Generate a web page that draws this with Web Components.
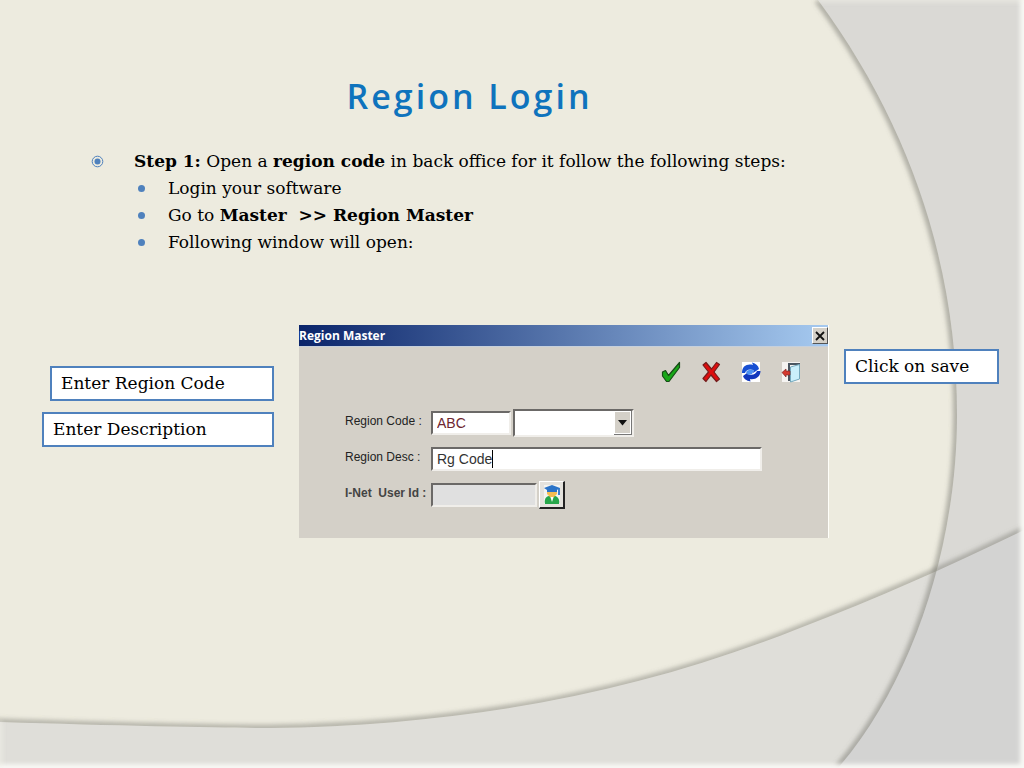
<!DOCTYPE html>
<html lang="en">
<head>
<meta charset="utf-8">
<meta name="viewport" content="width=device-width, initial-scale=1">
<title>Region Login</title>
<style>
html, body { margin: 0; min-height: 100%; background: #edebdf; }
body { font-family: "DejaVu Serif", serif; color: #000; }
</style>
</head>
<body>
<slide-page>
  <slide-title slot="title">Region Login</slide-title>
  <step-list slot="steps">
    <span><b>Step 1:</b> Open a <b>region code</b> in back office for it follow the following steps:</span>
    <step-item slot="items">Login your software</step-item>
    <step-item slot="items">Go to <b>Master&nbsp; &gt;&gt; Region Master</b></step-item>
    <step-item slot="items">Following window will open:</step-item>
  </step-list>
  <call-out slot="left" class="code">Enter Region Code</call-out>
  <call-out slot="left">Enter Description</call-out>
  <region-window slot="window"></region-window>
  <call-out slot="right">Click on save</call-out>
</slide-page>

<script>
function define(name, html) {
  const template = document.createElement('template');
  template.innerHTML = html;
  customElements.define(name, class extends HTMLElement {
    constructor() {
      super();
      this.attachShadow({ mode: 'open' }).append(template.content.cloneNode(true));
    }
  });
}

define('slide-backdrop', `
<style>
:host { display: block; }
svg { display: block; width: 100%; height: 100%; }
</style>
<svg viewBox="0 0 1024 768" preserveAspectRatio="none" aria-hidden="true">
  <defs>
    <filter id="soft" x="-10%" y="-10%" width="120%" height="120%"><feGaussianBlur stdDeviation="2"/></filter>
    <clipPath id="inside"><path d="M0 0H818C908 122 957 262 957 415C957 550 910 685 838 768H0Z"/></clipPath>
    <clipPath id="above"><path d="M0 0H1024V530C950 566 880 597 800 628C640 692 470 725 270 728C230 728 130 726 0 722Z"/></clipPath>
  </defs>
  <rect width="1024" height="768" fill="#edebdf"/>
  <path d="M0 722C130 726 230 728 270 728C470 725 640 692 800 628C880 597 950 566 1024 530V768H0Z" fill="#d2d1d4" fill-opacity=".5"/>
  <path d="M818 0C908 122 957 262 957 415C957 550 910 685 838 768H1024V0Z" fill="#c8c7cb" fill-opacity=".5"/>
  <g clip-path="url(#inside)"><path d="M818 0C908 122 957 262 957 415C957 550 910 685 838 768" fill="none" stroke="#77776f" stroke-opacity=".5" stroke-width="8" filter="url(#soft)"/></g>
  <g clip-path="url(#above)"><path d="M-20 721L0 722C130 726 230 728 270 728C470 725 640 692 800 628C880 597 950 566 1024 530" fill="none" stroke="#77776f" stroke-opacity=".46" stroke-width="7" filter="url(#soft)"/></g>
  <path d="M1024 -10V768H-10" fill="none" stroke="#f8f8f4" stroke-width="8" filter="url(#soft)"/>
  <path d="M0 721V768M818 0H1024" fill="none" stroke="#f3f2ea" stroke-width="3" filter="url(#soft)" opacity=".8"/>
</svg>`);

define('slide-page', `
<style>
:host { display: block; position: relative; box-sizing: border-box; min-height: 100vh; padding: 69px 25px 40px 42px; }
slide-backdrop { position: absolute; inset: 0; }
main { position: relative; }
.steps { padding: 25px 0 0 49px; }
.row { display: grid; grid-template-columns: 242fr 530fr 155fr; column-gap: 15px; padding-top: 69px; align-items: start; }
.left { display: flex; flex-direction: column; gap: 11px; padding: 41px 10px 0 0; }
.right { padding-top: 24px; }
::slotted(.code) { margin-left: 8px; }
</style>
<slide-backdrop></slide-backdrop>
<main>
  <slot name="title"></slot>
  <div class="steps"><slot name="steps"></slot></div>
  <div class="row">
    <div class="left"><slot name="left"></slot></div>
    <slot name="window"></slot>
    <div class="right"><slot name="right"></slot></div>
  </div>
</main>`);

define('slide-title', `
<style>
:host { display: block; padding-right: 102px; }
h1 { margin: 0; font: 600 34px/54px "Open Sans", sans-serif; letter-spacing: 3px; text-align: center; color: #0f73bd; }
</style>
<h1><slot></slot></h1>`);

define('step-list', `
<style>
:host { display: block; font-size: 17px; line-height: 27px; }
ul { list-style: none; margin: 0; padding: 0; }
.head { display: grid; grid-template-columns: 43px 1fr; align-items: center; }
svg { display: block; width: 13px; height: 13px; }
ul ul { padding-left: 47px; }
</style>
<ul><li>
  <div class="head">
    <svg viewBox="0 0 13 13" aria-hidden="true"><circle cx="6.500" cy="6.500" r="5.300" fill="none" stroke="#4f81bd" stroke-width="1"/><circle cx="6.500" cy="6.500" r="3" fill="#4f81bd"/></svg>
    <slot></slot>
  </div>
  <ul><slot name="items"></slot></ul>
</li></ul>`);

define('step-item', `
<style>
:host { display: block; }
li { list-style: none; display: grid; grid-template-columns: 30px 1fr; align-items: center; }
i { width: 7px; height: 7px; border-radius: 50%; background: #4f81bd; }
</style>
<li><i></i><span><slot></slot></span></li>`);

define('call-out', `
<style>
:host { display: block; box-sizing: border-box; padding: 4px 9px; border: 2px solid #4f81bd; background: #fff; font-size: 17px; line-height: 23px; white-space: nowrap; }
</style>
<slot></slot>`);

define('tool-button', `
<style>
:host { display: block; }
button { display: block; width: 20px; height: 22px; margin: 0; padding: 0; border: 0; background: none; }
::slotted(svg) { display: block; width: 20px; height: 22px; }
</style>
<button type="button"><slot></slot></button>`);

define('region-window', `
<style>
:host { display: block; box-sizing: border-box; min-width: 0; background: #d4d0c8; border-right: 1px solid #fffffa; font-family: "Liberation Sans", Arial, sans-serif; font-size: 13px; }
header { display: flex; align-items: center; justify-content: space-between; height: 22px; box-sizing: border-box; border-bottom: 1px solid #c6d0dc; background: linear-gradient(90deg, #0a246a, #a6caf0); }
h2 { margin: 0; font: 700 12px/20px "Open Sans", Tahoma, sans-serif; color: #fff; }
.close { width: 16px; height: 17px; padding: 0; border: 1px solid; border-color: #fff #555 #555 #fff; background: #d4d0c8; }
.close svg { display: block; margin: auto; width: 10px; height: 10px; }
.tools { display: flex; justify-content: flex-end; align-items: center; gap: 20px; height: 50px; padding-right: 27px; }
form { padding: 8px 66px 25px 46px; }
.field { display: grid; grid-template-columns: 86px 1fr; align-items: center; height: 36px; }
label { white-space: nowrap; font-size: 12px; color: #222; padding-bottom: 4px; }
label.strong { font-weight: 700; color: #444; }
.controls { display: flex; align-items: center; gap: 2px; position: relative; }
input, select { box-sizing: border-box; margin: 0; border: 2px solid; border-color: #6b6967 #f0eeea #f0eeea #6b6967; border-radius: 0; background: #fff; font: 14px/18px "Liberation Sans", Arial, sans-serif; color: #333; outline: 0; }
input { height: 24px; padding: 0 4px; }
.code { width: 80px; color: #6e2530; }
.desc { flex: 1; min-width: 0; }
.user { width: 106px; background: #e0e0e0; }
.combo { display: grid; position: relative; width: 121px; }
.combo select { appearance: none; height: 28px; width: 100%; }
.combo svg { position: absolute; top: 2px; right: 2px; width: 18px; height: 24px; pointer-events: none; }
.caret { position: absolute; left: 61px; top: 3px; width: 1px; height: 18px; background: #000; }
.pick { box-sizing: border-box; width: 26px; height: 28px; margin: 0; padding: 0; border: 1px solid; border-width: 1px 2px 2px 1px; border-color: #fff #222 #222 #fff; background: #e4e2dd; }
.pick svg { display: block; margin: auto; width: 18px; height: 21px; }
</style>
<header>
  <h2>Region Master</h2>
  <button class="close" type="button" aria-label="Close"><svg viewBox="0 0 10 10"><path d="M1 1L9 9M9 1L1 9" stroke="#111" stroke-width="1.800"/></svg></button>
</header>
<div class="tools">
  <tool-button><svg viewBox="0 0 20 22" role="img" aria-label="Save"><path d="M1.500 11L4.500 9.500L7.500 14.500L18.500 1.500V6.500L8 20.500H5.500L1.500 15Z" fill="#18a818" stroke="#174c17" stroke-width="1.200" stroke-linejoin="round"/></svg></tool-button>
  <tool-button><svg viewBox="0 0 20 22" role="img" aria-label="Cancel"><path d="M2 4L5 1.500L10.500 8L15.500 1.500L18.500 3.500L13 11L18.500 18L15.500 20.500L10 14L5 20.500L2 17.500L7.500 11Z" fill="#de0d0d" stroke="#741c1c" stroke-width="1.200" stroke-linejoin="round"/></svg></tool-button>
  <tool-button><svg viewBox="0 0 20 22" role="img" aria-label="Refresh"><path d="M1 1H19V21H1Z" fill="#fff"/><path d="M1 12C1 5 6 2.500 12 4L11 1.500C15 2.500 17.500 5 18 8L12 12L12.500 9C8 7.500 5 9 4 12Z" fill="#174fd2"/><path d="M19.500 10C19.500 16 14 19 9 18L9.500 20.500C5 19.500 3 18 2 15L8 10.500L8 13.500C12 14.500 15 13 16 10Z" fill="#1238bd"/><path d="M5 11C7 8.500 10 8 13 9.500L11 13L7 14Z" fill="#4c92f2"/></svg></tool-button>
  <tool-button><svg viewBox="0 0 20 22" role="img" aria-label="Exit"><path d="M1 1H19V21H1Z" fill="#f5f3f1"/><path d="M8 20V3H19" fill="none" stroke="#4a5560" stroke-width="2"/><path d="M9.500 6L18.500 3.500V18L9.500 21Z" fill="#caeffb" stroke="#75a9bd"/><path d="M1 11.500L5 8V10H9V14H5V16Z" fill="#d4392e" stroke="#802a26" stroke-width=".700"/></svg></tool-button>
</div>
<form onsubmit="return false">
  <div class="field">
    <label for="code">Region Code :</label>
    <div class="controls">
      <input class="code" id="code" type="text" value="ABC">
      <div class="combo">
        <select aria-label="Region list"><option></option></select>
        <svg viewBox="0 0 18 24" aria-hidden="true"><path d="M0 0H18V24H0Z" fill="#777"/><path d="M0 0H17V23H0Z" fill="#fff"/><path d="M1 1H16V22H1Z" fill="#d4d0c8"/><path d="M4 9H13L8.500 14.500Z" fill="#111"/></svg>
      </div>
    </div>
  </div>
  <div class="field">
    <label for="desc">Region Desc :</label>
    <div class="controls"><input class="desc" id="desc" type="text" value="Rg Code"><span class="caret"></span></div>
  </div>
  <div class="field">
    <label class="strong" for="user">I-Net&nbsp; User Id :</label>
    <div class="controls">
      <input class="user" id="user" type="text" readonly>
      <button class="pick" type="button" aria-label="Choose user"><svg viewBox="0 0 18 21"><path d="M1 1H17V20H1Z" fill="#f4f4f1"/><path d="M2 20C1 15 3 12.500 6 12H12C15 12.500 17 16 16 20Z" fill="#26a64a"/><path d="M7 12L9 18L11 12Z" fill="#fff"/><path d="M4 6H14V10L11 13H7L4 10Z" fill="#f5bd51"/><path d="M1 4L9 1L17 4L14 6V8H4V6Z" fill="#2a73c8"/><path d="M16 4V11" stroke="#2a73c8" stroke-width="1.800"/></svg></button>
    </div>
  </div>
</form>`);
</script>
</body>
</html>
